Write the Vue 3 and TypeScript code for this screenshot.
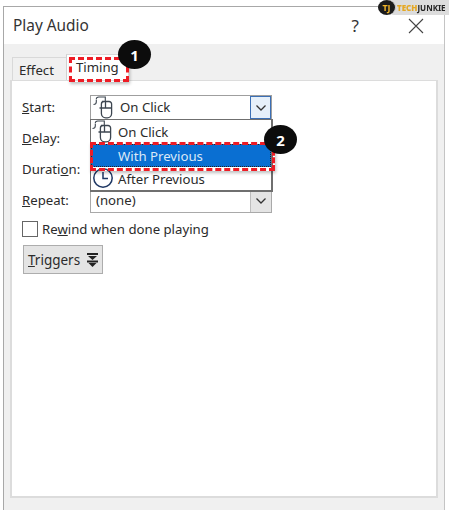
<template>
  <main class="page">
    <div class="dialog">
      <header class="titlebar">
        <h1>Play Audio</h1>
        <div class="title-buttons">
          <span class="help">?</span>
          <svg class="close" width="16" height="16" viewBox="0 0 16 16">
            <path d="M1 1 15 15M15 1 1 15" />
          </svg>
        </div>
      </header>

      <div class="body">
        <div class="tabs">
          <div class="tab">Effect</div>
          <div class="tab active">Timing</div>
        </div>

        <section class="panel">
          <div class="form">
            <div v-for="row in rows" :key="row.key" class="row">
              <label>{{ row.before }}<u>{{ row.mnemonic }}</u>{{ row.after }}</label>
              <div v-if="row.key === 'start'" class="combo focused">
                <svg class="mouse" width="24" height="24" viewBox="0 0 24 24">
                  <use href="#mouse-icon" />
                </svg>
                <span class="combo-text">On Click</span>
                <span class="arrow">
                  <svg width="12" height="8" viewBox="0 0 12 8"><path d="M1.5 1.5 6 6l4.5-4.5" /></svg>
                </span>
              </div>
              <div v-else-if="row.key === 'repeat'" class="combo">
                <span class="combo-text plain">(none)</span>
                <span class="arrow">
                  <svg width="12" height="8" viewBox="0 0 12 8"><path d="M1.5 1.5 6 6l4.5-4.5" /></svg>
                </span>
              </div>
            </div>
          </div>

          <div class="rewind">
            <span class="checkbox"></span>
            <span>Re<u>w</u>ind when done playing</span>
          </div>

          <button class="triggers">
            <span><u>T</u>riggers</span>
            <svg width="11" height="14" viewBox="0 0 11 14">
              <path class="solid" d="M0 0h11v2H0zM1 3h9L5.500 7zM0 7.500h11v2H0zM1.500 10h8l-4 4z" />
            </svg>
          </button>

          <ul class="dropdown">
            <li>
              <svg class="mouse" width="24" height="24" viewBox="0 0 24 24">
                <use href="#mouse-icon" />
              </svg>
              <span>On Click</span>
            </li>
            <li class="selected"><span>With Previous</span></li>
            <li>
              <svg class="clock" width="22" height="22" viewBox="0 0 22 22">
                <circle cx="11" cy="11" r="9.2" />
                <path d="M11 5v6.500h5" />
              </svg>
              <span>After Previous</span>
            </li>
          </ul>
        </section>
      </div>
    </div>

    <div class="marker marker-tab"></div>
    <div class="badge badge-one">1</div>
    <div class="marker marker-item"></div>
    <div class="badge badge-two">2</div>

    <div class="watermark">
      <span class="logo">TJ</span>
      <span class="brand"><b>TECH</b>JUNKIE</span>
    </div>

    <svg width="0" height="0" class="defs">
      <symbol id="mouse-icon" viewBox="0 0 24 24">
        <path d="M10 5.500h7a2.600 2.600 0 0 1 2.600 2.600v9.400a4.300 4.300 0 0 1-4.300 4.300h-1.600a4.300 4.300 0 0 1-4.300-4.300V8.100a2.600 2.600 0 0 1 2.600-2.600ZM7.500 12h12M13.500 5.500V12" fill="none" stroke="#3d4650" stroke-width="1.300" />
        <path d="M1.500 8.500c1.800 0 2.800-.8 2.800-2.500V3.800M4.300 3.300c0-1.500 1-2.300 2.500-2.300h6.500v4" fill="none" stroke="#3d4650" stroke-width="1.100" />
      </symbol>
    </svg>
  </main>
</template>

<script setup lang="ts">
interface Row {
  key: string
  before: string
  mnemonic: string
  after: string
}

const rows: Row[] = [
  { key: 'start', before: '', mnemonic: 'S', after: 'tart:' },
  { key: 'delay', before: '', mnemonic: 'D', after: 'elay:' },
  { key: 'duration', before: 'Durati', mnemonic: 'o', after: 'n:' },
  { key: 'repeat', before: '', mnemonic: 'R', after: 'epeat:' },
]
</script>

<style>
html,
body {
  margin: 0;
  background: #fff;
}
</style>

<style scoped>
.page {
  position: relative;
  width: 449px;
  height: 510px;
  overflow: hidden;
  padding: 6px 4px 0 3px;
  box-sizing: border-box;
  font-family: "Noto Sans", "Open Sans", sans-serif;
  font-size: 13.2px;
  color: #2b2b2b;
  filter: blur(0.35px);
}

.dialog {
  height: 520px;
  border: 1px solid #a8a8a8;
  border-bottom: none;
  border-right-color: #c4c4c4;
  box-sizing: border-box;
  display: flex;
  flex-direction: column;
}

.titlebar {
  height: 37px;
  background: #fff;
  display: flex;
  align-items: center;
  justify-content: space-between;
  padding: 0 20px 0 9px;
  flex: none;
}

.titlebar h1 {
  margin: 0;
  font-size: 15.4px;
  font-weight: 400;
  color: #333;
}

.title-buttons {
  display: flex;
  align-items: center;
  gap: 49px;
}

.help {
  font-size: 17px;
  color: #333;
}

.close path {
  fill: none;
  stroke: #444;
  stroke-width: 1.1;
}

.body {
  flex: 1;
  background: #f0f0f0;
  padding: 10px 6px 0 6px;
}

.tabs {
  display: flex;
  align-items: flex-end;
  height: 26px;
  padding-left: 2px;
}

.tab {
  height: 23px;
  width: 55px;
  box-sizing: border-box;
  border: 1px solid #d9d9d9;
  border-bottom: none;
  background: #f0f0f0;
  padding-left: 6px;
  line-height: 24px;
}

.tab.active {
  height: 27px;
  width: 63px;
  background: #fff;
  border-left-color: #d0d0d0;
  position: relative;
  top: 1px;
  line-height: 24px;
  padding: 0 0 4px 9px;
  margin-left: -1px;
}

.panel {
  position: relative;
  height: 418px;
  box-sizing: border-box;
  background: #fff;
  border: 2px solid #dcdcdc;
  border-width: 1px 2px 2px 2px;
  padding: 13px 0 0 10px;
}

.form {
  display: flex;
  flex-direction: column;
  gap: 6px;
}

.row {
  display: grid;
  grid-template-columns: 68px 182px;
  height: 25px;
  align-items: center;
  line-height: 27px;
}

.combo {
  height: 25px;
  box-sizing: border-box;
  border: 1px solid #a9a9a9;
  background: #fff;
  display: flex;
  align-items: center;
  position: relative;
}

.combo.focused {
  border-color: #9f9f9f;
}

.combo-text {
  margin-left: 4px;
  flex: 1;
}

.combo-text.plain {
  margin-left: 5px;
}

.combo .mouse {
  margin-left: 1px;
}

.arrow {
  width: 21px;
  height: 23px;
  box-sizing: border-box;
  display: flex;
  align-items: center;
  justify-content: center;
  background: #e4e4e4;
  border-left: 1px solid #bdbdbd;
}

.focused .arrow {
  background: #e6f0fa;
  border: 1px solid #3b6fb5;
}

.arrow path {
  fill: none;
  stroke: #333;
  stroke-width: 1.3;
}

.rewind {
  display: flex;
  align-items: center;
  gap: 4px;
  margin-top: 8px;
  height: 17px;
}

.checkbox {
  width: 16px;
  height: 16px;
  box-sizing: border-box;
  border: 1px solid #666;
  background: #fff;
}

.triggers {
  margin-top: 8px;
  margin-left: 1px;
  width: 80px;
  height: 29px;
  box-sizing: border-box;
  border: 1px solid #adadad;
  background: #e4e4e4;
  font: inherit;
  font-size: 13.5px;
  color: inherit;
  display: flex;
  align-items: center;
  gap: 7px;
  padding: 0 0 0 4px;
}

.solid {
  fill: #222;
}

.dropdown {
  position: absolute;
  left: 78px;
  top: 38px;
  width: 183px;
  height: 73px;
  margin: 0;
  padding: 0;
  box-sizing: border-box;
  list-style: none;
  background: #fff;
  border: 1px solid #6f6f6f;
  border-width: 1px 2px 2px 1px;
}

.dropdown li {
  height: 23.5px;
  display: flex;
  align-items: center;
  padding-left: 27px;
  padding-top: 1px;
  box-sizing: border-box;
  position: relative;
}

.dropdown li svg {
  position: absolute;
  left: 1px;
  top: 0;
}

.dropdown li .mouse {
  top: 0;
  left: 0;
}

.clock circle,
.clock path {
  fill: none;
  stroke: #1f3864;
  stroke-width: 1.5;
}

.dropdown li.selected {
  background: #0a6fd2;
  color: #dbe9f7;
  outline: 1px dotted #222;
  outline-offset: -1px;
}

.marker {
  position: absolute;
  border: 3px dashed #ee1c25;
  box-sizing: border-box;
  box-shadow: 1px 2px 3px rgba(0, 0, 0, 0.25);
}

.marker-tab {
  left: 69px;
  top: 57px;
  width: 60px;
  height: 25px;
}

.marker-item {
  left: 90px;
  top: 142px;
  width: 185px;
  height: 29px;
}

.badge {
  position: absolute;
  width: 33px;
  height: 29px;
  border-radius: 50%;
  background: #0c0c0c;
  color: #fff;
  font-weight: 700;
  font-size: 15px;
  display: flex;
  align-items: center;
  justify-content: center;
}

.badge-one {
  left: 118px;
  top: 40px;
}

.badge-two {
  left: 264px;
  top: 125px;
}

.watermark {
  position: absolute;
  left: 378px;
  top: 0;
  width: 71px;
  height: 15px;
  display: flex;
  align-items: center;
}

.logo {
  position: absolute;
  left: 0;
  top: 0;
  width: 17px;
  height: 15px;
  border-radius: 50%;
  background: #1c1c1c;
  color: #f0b429;
  font-size: 9px;
  font-weight: 700;
  display: flex;
  align-items: center;
  justify-content: center;
  border-right: 1px solid #ccc;
  z-index: 1;
}

.brand {
  margin-left: 10px;
  padding-left: 9px;
  height: 15px;
  flex: 1;
  background: #dcdcdc;
  border-bottom-left-radius: 6px;
  font-size: 8px;
  font-weight: 700;
  line-height: 15px;
  color: #222;
  white-space: nowrap;
}

.brand b {
  color: #e5a823;
}

.defs {
  position: absolute;
}
</style>
